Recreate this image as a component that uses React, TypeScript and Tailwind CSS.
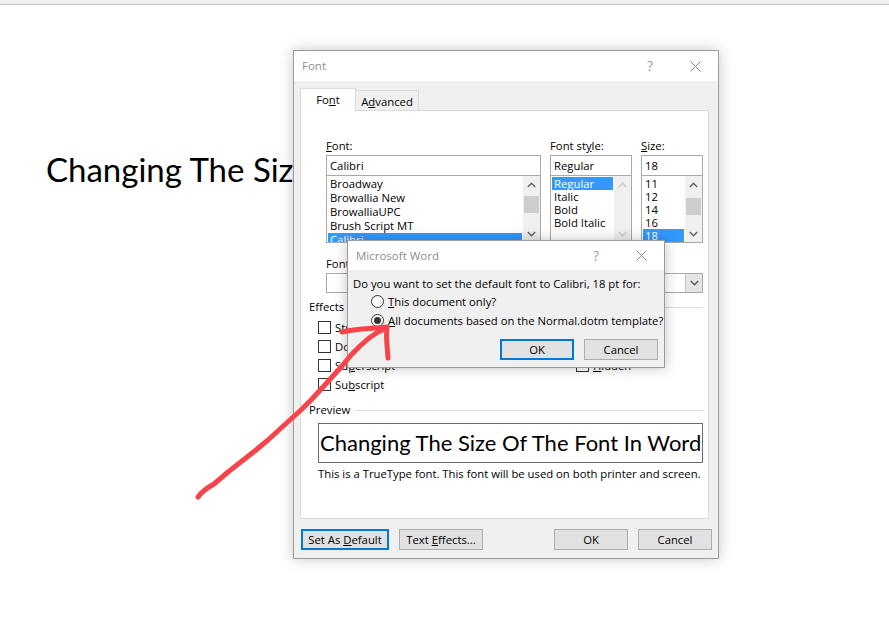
import React from "react";

const ui = "font-['Open_Sans',sans-serif] text-[11.3px] leading-[16px] text-black whitespace-nowrap";
const calibri = "font-['Lato',sans-serif]";

function TitleBar({ title, h }: { title: string; h: string }) {
  return (
    <div className={`flex items-center bg-white pl-[8px] pr-[17px] ${h}`}>
      <span className="flex-1 text-[11.5px] text-[#8e8e8e]">{title}</span>
      <span className="w-[10px] text-center text-[14px] text-[#a0a0a0]">?</span>
      <svg className="ml-[35px]" width="11" height="11" viewBox="0 0 11 11">
        <path d="M0.5 0.5 L10.5 10.5 M10.5 0.5 L0.5 10.5" stroke="#8a8a8a" strokeWidth="1" />
      </svg>
    </div>
  );
}

function Chevron({ up, color }: { up?: boolean; color: string }) {
  return (
    <svg width="9" height="6" viewBox="0 0 9 6">
      <path
        d={up ? "M0.8 5 L4.5 1.3 L8.2 5" : "M0.8 1 L4.5 4.7 L8.2 1"}
        fill="none"
        stroke={color}
        strokeWidth="1.4"
      />
    </svg>
  );
}

function ScrollBar({ thumb, disabled }: { thumb?: string; disabled?: boolean }) {
  const c = disabled ? "#c8c8c8" : "#606060";
  return (
    <div className="flex w-[17px] flex-col bg-[#f0f0f0]">
      <div className="flex h-[17px] items-center justify-center">
        <Chevron up color={c} />
      </div>
      <div className="flex-1">
        {thumb && <div className={`mx-[1px] h-[17px] bg-[#cdcdcd] ${thumb}`} />}
      </div>
      <div className="flex h-[17px] items-center justify-center">
        <Chevron color={c} />
      </div>
    </div>
  );
}

function ListBox({
  items,
  selected,
  row,
  thumb,
  disabled,
}: {
  items: string[];
  selected: number;
  row: string;
  thumb?: string;
  disabled?: boolean;
}) {
  return (
    <div className="flex h-[67px] overflow-hidden border border-t-0 border-[#a9a9a9] bg-white">
      <div className="flex-1 overflow-hidden pt-[1px]">
        {items.map((it, i) => (
          <div
            key={it}
            className={`ml-[1px] mr-[1px] pl-[2px] ${row} ${i === selected ? "bg-[#3399ff] text-white" : ""}`}
          >
            {it}
          </div>
        ))}
      </div>
      <ScrollBar thumb={thumb} disabled={disabled} />
    </div>
  );
}

function Field({ value }: { value: string }) {
  return (
    <div className="flex h-[21px] items-center border border-[#a9a9a9] bg-white pl-[3px]">{value}</div>
  );
}

function Combo({ w }: { w: string }) {
  return (
    <div className={`flex h-[20px] border border-[#a9a9a9] bg-white ${w}`}>
      <div className="flex-1" />
      <div className="flex w-[17px] items-center justify-center border-l border-[#c4c4c4] bg-[#e5e5e5]">
        <Chevron color="#555555" />
      </div>
    </div>
  );
}

function Check({ label }: { label: React.ReactNode }) {
  return (
    <div className="flex h-[19px] items-center">
      <div className="h-[13px] w-[13px] border border-[#333333] bg-white" />
      <span className="ml-[4px]">{label}</span>
    </div>
  );
}

function Btn({ w, active, children }: { w: string; active?: boolean; children: React.ReactNode }) {
  return (
    <div
      className={`flex h-[21px] items-center justify-center bg-[#e1e1e1] ${w} ${
        active ? "border-2 border-[#0078d7]" : "border border-[#adadad]"
      }`}
    >
      {children}
    </div>
  );
}

function Radio({ on, label }: { on?: boolean; label: React.ReactNode }) {
  return (
    <div className="flex h-[19px] items-center">
      <div className="flex h-[13px] w-[13px] items-center justify-center rounded-full border border-[#333333] bg-white">
        {on && <div className="h-[7px] w-[7px] rounded-full bg-[#333333]" />}
      </div>
      <span className="ml-[4px]">{label}</span>
    </div>
  );
}

function FontDialog() {
  return (
    <div className={`absolute left-[293px] top-[50px] flex w-[426px] flex-col border border-[#9b9b9b] bg-[#f0f0f0] shadow-[0_0_14px_rgba(0,0,0,0.22)] ${ui}`}>
      <TitleBar title="Font" h="h-[30px]" />
      <div className="px-[6px] pt-[7px]">
        <div className="flex h-[22px] items-end">
          <div className="relative z-10 -mb-px flex h-[23px] w-[56px] items-center justify-center border border-b-0 border-[#d9d9d9] bg-white">
            <span>
              Fo<u>n</u>t
            </span>
          </div>
          <div className="flex h-[20px] w-[63px] items-center justify-center border border-b-0 border-l-0 border-[#d9d9d9] bg-[#f0f0f0] pt-[2px]">
            <span>
              A<u>d</u>vanced
            </span>
          </div>
        </div>
        <div className="h-[409px] w-[409px] border border-[#d9d9d9] bg-white pt-[27px]">
          <div className="flex gap-[9px] pl-[25px]">
            <div className="w-[215px]">
              <div className="mb-[1px] h-[16px]">
                <u>F</u>ont:
              </div>
              <Field value="Calibri" />
              <ListBox
                items={["Broadway", "Browallia New", "BrowalliaUPC", "Brush Script MT", "Calibri"]}
                selected={4}
                row="h-[14px] leading-[14px]"
                thumb="mt-[3px]"
              />
            </div>
            <div className="w-[82px]">
              <div className="mb-[1px] h-[16px]">
                Font st<u>y</u>le:
              </div>
              <Field value="Regular" />
              <ListBox
                items={["Regular", "Italic", "Bold", "Bold Italic"]}
                selected={0}
                row="h-[13px] leading-[13px]"
                disabled
              />
            </div>
            <div className="w-[62px]">
              <div className="mb-[1px] h-[16px]">
                <u>S</u>ize:
              </div>
              <Field value="18" />
              <ListBox
                items={["11", "12", "14", "16", "18"]}
                selected={4}
                row="h-[13px] leading-[13px]"
                thumb="mt-[5px]"
              />
            </div>
          </div>

          <div className="mt-[13px] flex gap-[9px] pl-[25px]">
            <div>
              <div className="mb-[1px] h-[16px]">
                Font <u>c</u>olor:
              </div>
              <Combo w="w-[111px]" />
            </div>
            <div>
              <div className="mb-[1px] h-[16px]">
                <u>U</u>nderline style:
              </div>
              <Combo w="w-[121px]" />
            </div>
            <div>
              <div className="mb-[1px] h-[16px]">
                Underline color:
              </div>
              <Combo w="w-[127px]" />
            </div>
          </div>

          <div className="mt-[6px] flex items-center pl-[8px] pr-[5px]">
            <span>Effects</span>
            <div className="ml-[5px] h-px flex-1 bg-[#dcdcdc]" />
          </div>
          <div className="mt-[3px] flex pl-[17px]">
            <div className="w-[258px]">
              <Check label={<>Stri<u>k</u>ethrough</>} />
              <Check label={<>Doub<u>l</u>e strikethrough</>} />
              <Check label={<>Su<u>p</u>erscript</>} />
              <Check label={<>Su<u>b</u>script</>} />
            </div>
            <div>
              <Check label={<>S<u>m</u>all caps</>} />
              <Check label={<><u>A</u>ll caps</>} />
              <Check label={<><u>H</u>idden</>} />
            </div>
          </div>

          <div className="mt-[8px] flex items-center pl-[8px] pr-[5px]">
            <span>Preview</span>
            <div className="ml-[5px] h-px flex-1 bg-[#dcdcdc]" />
          </div>
          <div className="ml-[17px] mt-[5px] flex h-[40px] w-[385px] items-center overflow-hidden border border-[#6b6b6b] pl-[1px]">
            <span className={`${calibri} text-[22px] leading-[28px]`}>
              Changing The Size Of The Font In Word
            </span>
          </div>
          <div className="ml-[17px] mt-[3px]">
            This is a TrueType font. This font will be used on both printer and screen.
          </div>
        </div>
      </div>
      <div className="mt-[10px] flex pb-[8px] pl-[7px] pr-[6px]">
        <Btn w="w-[88px]" active>
          <span>
            Set As <u>D</u>efault
          </span>
        </Btn>
        <div className="ml-[10px]">
          <Btn w="w-[84px]">
            <span>
              Text <u>E</u>ffects...
            </span>
          </Btn>
        </div>
        <div className="flex-1" />
        <Btn w="w-[74px]">OK</Btn>
        <div className="ml-[10px]">
          <Btn w="w-[74px]">Cancel</Btn>
        </div>
      </div>
    </div>
  );
}

function MessageBox() {
  return (
    <div className={`absolute left-[347px] top-[240px] z-20 flex w-[318px] flex-col border border-[#9b9b9b] bg-[#f0f0f0] shadow-[0_0_12px_rgba(0,0,0,0.25)] ${ui}`}>
      <TitleBar title="Microsoft Word" h="h-[29px]" />
      <div className="pl-[5px] pt-[6px]">
        <div>Do you want to set the default font to Calibri, 18 pt for:</div>
        <div className="ml-[18px]">
          <Radio label={<><u>T</u>his document only?</>} />
          <Radio on label={<><u>A</u>ll documents based on the Normal.dotm template?</>} />
        </div>
      </div>
      <div className="mt-[9px] flex justify-end gap-[10px] pb-[7px] pr-[6px]">
        <Btn w="w-[74px]" active>
          OK
        </Btn>
        <Btn w="w-[74px]">Cancel</Btn>
      </div>
    </div>
  );
}

function Arrow() {
  return (
    <svg className="pointer-events-none absolute left-0 top-0 z-30" width="889" height="643" viewBox="0 0 889 643">
      <g fill="none" stroke="#f9434a" strokeWidth="5" strokeLinecap="round" strokeLinejoin="round">
        <path d="M198 497 Q203 490 214 484 L228 472 L242 461 L256 450 L268 440 L280 429 L291 419 L302 409 L312 399 L323 387 L333 376 L342 366 L351 355 L360 346 L369 338 L378 332 L386 328" />
        <path d="M342 332 Q351 330 362 329 L376 328 L387 327 Q386 336 387 345 L388 358" />
      </g>
    </svg>
  );
}

export default function App() {
  return (
    <div className="relative h-[643px] w-[889px] overflow-hidden bg-white">
      <div className="h-[5px] border-b border-[#c6c6c6] bg-[#f0f0f0]" />
      <div className={`${calibri} whitespace-nowrap pl-[46px] pt-[142px] text-[33px] leading-[44px] text-black`}>
        Changing The Size Of The Font In Word
      </div>
      <FontDialog />
      <MessageBox />
      <Arrow />
    </div>
  );
}
